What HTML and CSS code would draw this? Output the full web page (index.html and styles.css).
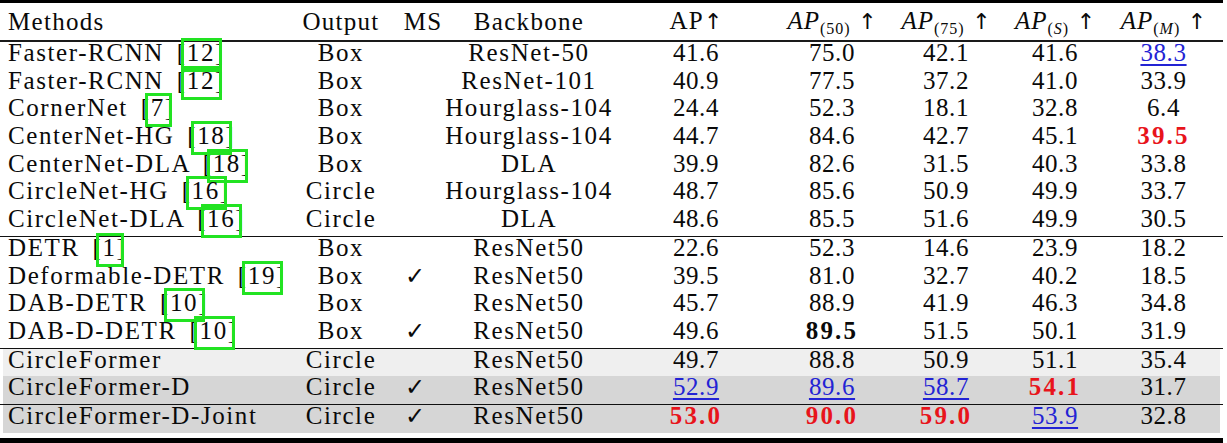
FILE: index.html
```html
<!DOCTYPE html>
<html lang="en">
<head>
<meta charset="utf-8">
<title>Detection results</title>
<link rel="stylesheet" href="styles.css">
</head>
<body>
<div class="tbl">
  <div class="row head">
    <div class="c left">Methods</div>
    <div class="c">Output</div>
    <div class="c ms">MS</div>
    <div class="c">Backbone</div>
    <div class="c">AP<span class="arr">↑</span></div>
    <div class="c"><i>AP</i><sub>(50)</sub> <span class="arr">↑</span></div>
    <div class="c"><i>AP</i><sub>(75)</sub> <span class="arr">↑</span></div>
    <div class="c"><i>AP</i><sub>(<i>S</i>)</sub> <span class="arr">↑</span></div>
    <div class="c"><i>AP</i><sub>(<i>M</i>)</sub> <span class="arr">↑</span></div>
  </div>

  <div class="group">
    <div class="row">
      <div class="c left">Faster-RCNN <span class="cite">[<span class="ref">12</span>]</span></div>
      <div class="c">Box</div><div class="c"></div><div class="c">ResNet-50</div>
      <div class="c">41.6</div><div class="c">75.0</div><div class="c">42.1</div><div class="c">41.6</div><div class="c"><span class="second">38.3</span></div>
    </div>
    <div class="row">
      <div class="c left">Faster-RCNN <span class="cite">[<span class="ref">12</span>]</span></div>
      <div class="c">Box</div><div class="c"></div><div class="c">ResNet-101</div>
      <div class="c">40.9</div><div class="c">77.5</div><div class="c">37.2</div><div class="c">41.0</div><div class="c">33.9</div>
    </div>
    <div class="row">
      <div class="c left">CornerNet <span class="cite">[<span class="ref">7</span>]</span></div>
      <div class="c">Box</div><div class="c"></div><div class="c">Hourglass-104</div>
      <div class="c">24.4</div><div class="c">52.3</div><div class="c">18.1</div><div class="c">32.8</div><div class="c">6.4</div>
    </div>
    <div class="row">
      <div class="c left">CenterNet-HG <span class="cite">[<span class="ref">18</span>]</span></div>
      <div class="c">Box</div><div class="c"></div><div class="c">Hourglass-104</div>
      <div class="c">44.7</div><div class="c">84.6</div><div class="c">42.7</div><div class="c">45.1</div><div class="c"><b class="best">39.5</b></div>
    </div>
    <div class="row">
      <div class="c left">CenterNet-DLA <span class="cite">[<span class="ref">18</span>]</span></div>
      <div class="c">Box</div><div class="c"></div><div class="c">DLA</div>
      <div class="c">39.9</div><div class="c">82.6</div><div class="c">31.5</div><div class="c">40.3</div><div class="c">33.8</div>
    </div>
    <div class="row">
      <div class="c left">CircleNet-HG <span class="cite">[<span class="ref">16</span>]</span></div>
      <div class="c">Circle</div><div class="c"></div><div class="c">Hourglass-104</div>
      <div class="c">48.7</div><div class="c">85.6</div><div class="c">50.9</div><div class="c">49.9</div><div class="c">33.7</div>
    </div>
    <div class="row">
      <div class="c left">CircleNet-DLA <span class="cite">[<span class="ref">16</span>]</span></div>
      <div class="c">Circle</div><div class="c"></div><div class="c">DLA</div>
      <div class="c">48.6</div><div class="c">85.5</div><div class="c">51.6</div><div class="c">49.9</div><div class="c">30.5</div>
    </div>
  </div>

  <div class="group">
    <div class="row">
      <div class="c left">DETR <span class="cite">[<span class="ref">1</span>]</span></div>
      <div class="c">Box</div><div class="c"></div><div class="c">ResNet50</div>
      <div class="c">22.6</div><div class="c">52.3</div><div class="c">14.6</div><div class="c">23.9</div><div class="c">18.2</div>
    </div>
    <div class="row">
      <div class="c left">Deformable-DETR <span class="cite">[<span class="ref">19</span>]</span></div>
      <div class="c">Box</div><div class="c check">✓</div><div class="c">ResNet50</div>
      <div class="c">39.5</div><div class="c">81.0</div><div class="c">32.7</div><div class="c">40.2</div><div class="c">18.5</div>
    </div>
    <div class="row">
      <div class="c left">DAB-DETR <span class="cite">[<span class="ref">10</span>]</span></div>
      <div class="c">Box</div><div class="c"></div><div class="c">ResNet50</div>
      <div class="c">45.7</div><div class="c">88.9</div><div class="c">41.9</div><div class="c">46.3</div><div class="c">34.8</div>
    </div>
    <div class="row">
      <div class="c left">DAB-D-DETR <span class="cite">[<span class="ref">10</span>]</span></div>
      <div class="c">Box</div><div class="c check">✓</div><div class="c">ResNet50</div>
      <div class="c">49.6</div><div class="c"><b>89.5</b></div><div class="c">51.5</div><div class="c">50.1</div><div class="c">31.9</div>
    </div>
  </div>

  <div class="group last">
    <div class="row light">
      <div class="c left">CircleFormer</div>
      <div class="c">Circle</div><div class="c"></div><div class="c">ResNet50</div>
      <div class="c">49.7</div><div class="c">88.8</div><div class="c">50.9</div><div class="c">51.1</div><div class="c">35.4</div>
    </div>
    <div class="row dark">
      <div class="c left">CircleFormer-D</div>
      <div class="c">Circle</div><div class="c check">✓</div><div class="c">ResNet50</div>
      <div class="c"><span class="second">52.9</span></div><div class="c"><span class="second">89.6</span></div><div class="c"><span class="second">58.7</span></div><div class="c"><b class="best">54.1</b></div><div class="c">31.7</div>
    </div>
    <div class="row dark ruled">
      <div class="c left">CircleFormer-D-Joint</div>
      <div class="c">Circle</div><div class="c check">✓</div><div class="c">ResNet50</div>
      <div class="c"><b class="best">53.0</b></div><div class="c"><b class="best">90.0</b></div><div class="c"><b class="best">59.0</b></div><div class="c"><span class="second">53.9</span></div><div class="c">32.8</div>
    </div>
  </div>
</div>
</body>
</html>
```

FILE: styles.css
```css
html, body {
  margin: 0;
  padding: 0;
  background: #ffffff;
}

body {
  font-family: "Liberation Serif", "Times New Roman", serif;
  font-size: 25px;
  color: #0a0a0a;
}

.tbl {
  width: 1223px;
  border-top: 3px solid #000000;
  border-bottom: 5px solid #000000;
  padding-bottom: 5px;
}

.row {
  display: grid;
  grid-template-columns: 290px 102px 52px 170px 164px 108px 120px 98px 119px;
  height: 27.7px;
  line-height: 22px;
  letter-spacing: 1.6px;
  white-space: nowrap;
}

.row:not(.head) .c:nth-child(n+5) {
  letter-spacing: 0.6px;
}

.row.head {
  height: 39px;
  box-sizing: border-box;
  border-bottom: 2px solid #1a1a1a;
  align-items: end;
  letter-spacing: 1.3px;
}

.row.head .c {
  padding-bottom: 7px;
}

.row.head .ms {
  padding-left: 10px;
}

.arr {
  font-family: "DejaVu Sans", sans-serif;
  font-size: 22px;
  letter-spacing: 0;
}

.group {
  border-bottom: 1px solid #111111;
}

.group.last {
  border-bottom: none;
}

.c {
  text-align: center;
}

.c.left {
  text-align: left;
  padding-left: 8px;
}

.check {
  font-family: "DejaVu Sans", sans-serif;
  font-size: 24px;
  letter-spacing: 0;
  padding-right: 6px;
}

i {
  font-style: italic;
  letter-spacing: 1px;
}

sub {
  font-size: 16px;
  line-height: 0;
  vertical-align: -5px;
  letter-spacing: 1px;
}

.row.light {
  background: #efefef;
  box-shadow: inset 3px 0 0 #ffffff, inset -3px 0 0 #ffffff;
}

.row.dark {
  background: #d6d6d6;
  box-shadow: inset 3px 0 0 #ffffff, inset -3px 0 0 #ffffff;
}

.row.ruled {
  border-top: 1px solid #111111;
}

b {
  font-weight: bold;
  letter-spacing: 2.2px;
}

.best {
  color: #e8141b;
}

.second {
  color: #2323d4;
  text-decoration: underline;
  text-decoration-thickness: 1.5px;
  text-underline-offset: 3px;
}

.cite {
  margin-left: 5px;
}

.ref {
  position: relative;
}

.ref::after {
  content: "";
  position: absolute;
  left: -6px;
  right: -7px;
  top: -1px;
  bottom: -6px;
  border: 3px solid #22e322;
}
```
